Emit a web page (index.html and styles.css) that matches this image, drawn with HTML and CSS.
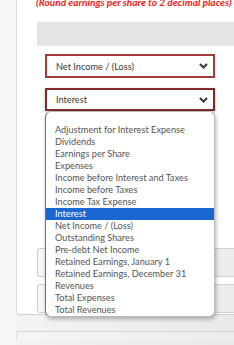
FILE: index.html
```html
<!DOCTYPE html>
<html lang="en">
<head>
  <meta charset="UTF-8">
  <meta name="viewport" content="width=device-width, initial-scale=1.0">
  <title>Income Statement</title>
  <link rel="stylesheet" href="styles.css">
</head>
<body>
  <div class="page">
    <div class="side"></div>
    <div class="main">
      <div class="card">
        <p class="note">(Round earnings per share to 2 decimal places)</p>
        <div class="heading-bar"></div>

        <div class="field">
          <div class="select">
            <span>Net Income / (Loss)</span>
            <svg class="chev" width="9" height="6" viewBox="0 0 9 6"><path d="M1 1 L4.5 4.5 L8 1" fill="none" stroke="#3d3d3d" stroke-width="2.2"/></svg>
          </div>
        </div>

        <div class="field">
          <div class="select open">
            <span>Interest</span>
            <svg class="chev" width="9" height="6" viewBox="0 0 9 6"><path d="M1 1 L4.5 4.5 L8 1" fill="none" stroke="#3d3d3d" stroke-width="2.2"/></svg>
          </div>
          <ul class="options">
            <li></li>
            <li>Adjustment for Interest Expense</li>
            <li>Dividends</li>
            <li>Earnings per Share</li>
            <li>Expenses</li>
            <li>Income before Interest and Taxes</li>
            <li>Income before Taxes</li>
            <li>Income Tax Expense</li>
            <li class="selected">Interest</li>
            <li>Net Income / (Loss)</li>
            <li>Outstanding Shares</li>
            <li>Pre-debt Net Income</li>
            <li>Retained Earnings, January 1</li>
            <li>Retained Earnings, December 31</li>
            <li>Revenues</li>
            <li>Total Expenses</li>
            <li>Total Revenues</li>
          </ul>
        </div>

        <div class="rows">
          <div class="row-box"></div>
          <div class="row-box"></div>
        </div>
      </div>
      <div class="card next"></div>
    </div>
  </div>
</body>
</html>
```

FILE: styles.css
```css
body {
  margin: 0;
  padding: 0;
  width: 234px;
  height: 345px;
  overflow: hidden;
  background: #f4f4f4;
  font-family: 'Lato', 'Open Sans', sans-serif;
}

.page {
  display: flex;
  height: 345px;
  overflow: hidden;
}

.side {
  width: 16px;
  flex: none;
  background: #f8f8f8;
}

.main {
  flex: 1;
  background: linear-gradient(90deg, #f3f3f3, #e9e9e9);
}

.card {
  background: #fff;
  border-left: 1px solid #dcdcdc;
  border-bottom: 1px solid #cfcfcf;
  border-bottom-left-radius: 4px;
  height: 319px;
  box-sizing: border-box;
  padding-left: 20px;
  position: relative;
}

.card.next {
  height: 9px;
  margin-top: 16px;
  border-top: 1px solid #d4d4d4;
  border-bottom: none;
  border-radius: 3px 0 0 0;
  background: linear-gradient(90deg, #f6f6f6, #ececec);
}

.note {
  margin: -4px 0 0 -1px;
  color: #f01d1d;
  font-style: italic;
  font-weight: bold;
  font-size: 10.1px;
  white-space: nowrap;
  line-height: 13px;
}

.heading-bar {
  height: 24px;
  margin-top: 13px;
  background: #e4e4e4;
}

.field {
  margin-left: 8px;
  width: 170px;
  margin-top: 8px;
  position: relative;
}

.field + .field {
  margin-top: 10px;
}

.select {
  box-sizing: border-box;
  height: 24px;
  border: 2px solid #a33c3c;
  background: #fff;
  display: flex;
  align-items: center;
  justify-content: space-between;
  padding: 0 5px 0 9px;
  font-size: 9.2px;
  color: #3a3a3a;
}

.select.open {
  height: 23px;
  border-color: #7e2b2b;
  box-shadow: 0 1px 3px rgba(0, 0, 0, 0.25);
}

.chev {
  display: block;
}

.options {
  position: absolute;
  z-index: 2;
  top: 23px;
  left: 0;
  width: 170px;
  box-sizing: border-box;
  margin: 0;
  padding: 0;
  list-style: none;
  background: #fff;
  border: 1px solid #b9b9b9;
  border-left-color: #6a766a;
  border-radius: 6px;
  box-shadow: 1px 2px 4px rgba(0, 0, 0, 0.3);
  overflow: hidden;
}

.options li {
  height: 12px;
  line-height: 12px;
  padding-left: 9px;
  font-size: 9.2px;
  color: #555;
  white-space: nowrap;
}

.options li.selected {
  background: #1a67d2;
  color: #fff;
}

.rows {
  margin-top: 137px;
}

.row-box {
  height: 27px;
  margin-bottom: 7px;
  border: 1px solid #d0d0d0;
  border-right: none;
  border-radius: 3px 0 0 3px;
  background: linear-gradient(90deg, #f7f7f7, #ececec);
}
```
